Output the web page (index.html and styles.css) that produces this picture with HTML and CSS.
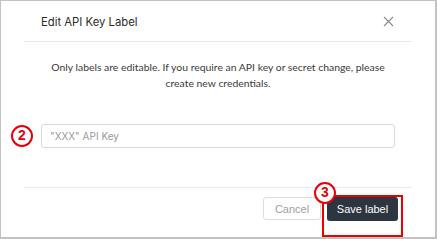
FILE: index.html
```html
<!DOCTYPE html>
<html>
<head>
<title>Edit API Key Label</title>
<link rel="stylesheet" href="styles.css">
</head>
<body>
<div class="frame">
  <div class="modal-header">
    <span class="modal-title">Edit API Key Label</span>
    <svg class="close" width="11" height="11" viewBox="0 0 11 11">
      <path d="M1 1 L10 10 M10 1 L1 10" stroke="#8a8a8a" stroke-width="1.1" fill="none"/>
    </svg>
  </div>

  <div class="modal-body">
    <p class="note">Only labels are editable. If you require an API key or secret change, please create new credentials.</p>
    <div class="field">
      <span class="step step-2">2</span>
      <input class="label-input" type="text" placeholder="&quot;XXX&quot; API Key">
    </div>
  </div>

  <div class="modal-footer">
    <button class="btn btn-cancel">Cancel</button>
    <div class="save-wrap">
      <button class="btn btn-save">Save label</button>
      <span class="highlight"></span>
      <span class="step step-3">3</span>
    </div>
  </div>
</div>
</body>
</html>
```

FILE: styles.css
```css
body {
  margin: 0;
  background-color: #fff;
}

.frame {
  box-sizing: border-box;
  width: 437px;
  height: 239px;
  border: 1px solid #c2c2c2;
  border-right-width: 2px;
  border-bottom-width: 2px;
  background-color: #fff;
  overflow: hidden;
}

.modal-header {
  margin: 0 23px;
  padding: 0 18px 0 17px;
  height: 40px;
  border-bottom: 1px solid #e9e9e9;
  display: flex;
  align-items: center;
  justify-content: space-between;
}

.modal-title {
  font-family: Inter, "Open Sans", sans-serif;
  font-size: 11.3px;
  color: #2b2b2b;
  margin-top: 1px;
}

.close {
  margin-top: 1px;
}

.modal-body {
  padding: 0 23px;
}

.note {
  margin: 17px 0 0;
  padding: 0 24px;
  text-align: center;
  font-family: Lato, "Liberation Sans", sans-serif;
  font-size: 10.4px;
  line-height: 16px;
  color: #3a3a3a;
}

.field {
  position: relative;
  margin: 33px 17px 0;
  height: 63px;
}

.label-input {
  box-sizing: border-box;
  width: 354px;
  height: 24px;
  border: 1px solid #dadada;
  border-radius: 3px;
  padding: 0 8px;
  font-family: Inter, "Open Sans", sans-serif;
  font-size: 10px;
  color: #333;
  outline: none;
}

.label-input::placeholder {
  color: #9a9a9a;
}

.step {
  position: absolute;
  box-sizing: border-box;
  width: 22px;
  height: 22px;
  border: 2.5px solid #e8000b;
  border-radius: 50%;
  background-color: #fff;
  color: #e8000b;
  font-family: "Liberation Sans", Arial, sans-serif;
  font-weight: bold;
  font-size: 14px;
  line-height: 17px;
  text-align: center;
}

.step-2 {
  left: -30px;
  top: 1px;
}

.modal-footer {
  margin: 0 23px;
  border-top: 1px solid #e9e9e9;
  padding: 8px 14px 0 0;
  display: flex;
  justify-content: flex-end;
  align-items: flex-start;
}

.btn {
  box-sizing: border-box;
  height: 23px;
  border-radius: 3px;
  font-family: "Liberation Sans", Arial, sans-serif;
  font-size: 11px;
  cursor: pointer;
}

.btn-cancel {
  width: 58px;
  margin-top: 1px;
  border: 1px solid #dcdcdc;
  background-color: #fff;
  color: #a0a0a0;
}

.save-wrap {
  position: relative;
  margin-left: 6px;
}

.btn-save {
  width: 71px;
  height: 24px;
  margin-top: 1px;
  border: none;
  background-color: #2c3540;
  color: #fff;
}

.highlight {
  position: absolute;
  left: -5px;
  top: -1px;
  width: 77px;
  height: 38px;
  border: 2px solid #ee0000;
}

.step-3 {
  left: -13px;
  top: -14px;
}
```
